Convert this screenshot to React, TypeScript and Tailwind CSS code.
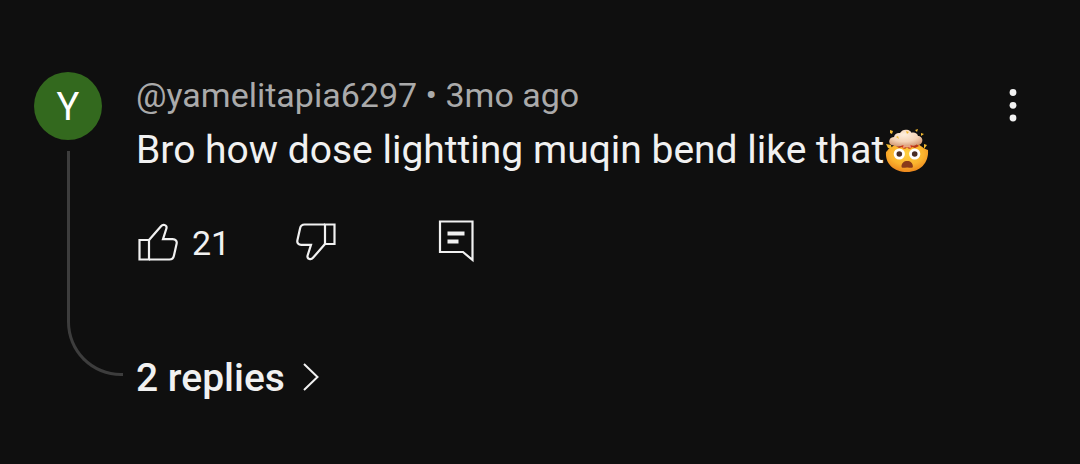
import React from 'react'

type CommentData = {
  author: string
  initial: string
  age: string
  text: string
  likes: number
  replies: number
}

const comment: CommentData = {
  author: '@yamelitapia6297',
  initial: 'Y',
  age: '3mo ago',
  text: 'Bro how dose lightting muqin bend like that',
  likes: 21,
  replies: 2,
}

const ThumbIcon: React.FC<{className?: string}> = ({className = ''}) => (
  <svg
    viewBox="0 0 40 40"
    fill="none"
    stroke="currentColor"
    strokeWidth="2.2"
    className={`size-10 ${className}`}
    aria-hidden="true"
  >
    <path d="M1.500 18H11v19.500H1.500z" />
    <path d="M11 18 23 4.200c1-1.200 2.300-1.700 3.600-1.200 1.600.5 2.300 1.900 1.800 3.500L25 17.200h9.700c2.900 0 4.500 1.900 3.900 4.500l-2.700 12.100c-.5 2.400-2 3.700-4.400 3.700H11" />
  </svg>
)

const ReplyIcon = () => (
  <svg viewBox="0 0 36 44" fill="none" className="h-11 w-9" aria-hidden="true">
    <path d="M2 1.500h32.500v38.500L25 32H2z" stroke="currentColor" strokeWidth="2.200" />
    <path d="M9.500 13.500h17M9.500 21.500h11" stroke="currentColor" strokeWidth="4" />
  </svg>
)

const ExplodingHead = () => (
  <svg viewBox="0 0 46 46" className="size-[46px] shrink-0" role="img" aria-label="exploding head">
    <defs>
      <radialGradient id="face" cx="50%" cy="35%" r="65%">
        <stop offset="0" stopColor="#ffd03f" />
        <stop offset="0.6" stopColor="#fbb42e" />
        <stop offset="1" stopColor="#ec861d" />
      </radialGradient>
      <radialGradient id="cloud" cx="45%" cy="30%" r="70%">
        <stop offset="0" stopColor="#fdeedd" />
        <stop offset="0.6" stopColor="#f3d2b5" />
        <stop offset="1" stopColor="#d59d7a" />
      </radialGradient>
    </defs>
    <path
      d="M2 25c1.500-1 2.500-4 5-4.500L12 17h22l5 3.500c1.500 1.500 3 1.500 5 2.500 1 13-8 22-21 22S1 37 2 25z"
      fill="url(#face)"
    />
    <path d="M12 19l4-5h14l5 5-4 2-3-1-3 2-2-2-2 2-3-2-3 1z" fill="#b83a1b" />
    <path d="M18 17l1 5 2-2zM28 17l-1 5-2-2z" fill="#e8321c" />
    <path d="M20 15h6l1 6-4-1-4 1z" fill="#e9a680" />
    <path
      d="M10 18.500c-4 0-5.500-3-4.500-5.500.8-2.300 2.500-3 4.500-3 .5-3 3.300-4.500 6-4 1.500-2.800 4.500-3.800 7-3.200 2 .3 3.500 1.300 4.500 3 3-1 6 .7 6.500 3.200 3 0 5 2.500 4.200 5.500-.7 2.800-3.200 4-5.700 3-2 1.500-4.500 1.500-6 .3-2 1.200-5 1.200-7 .2-3 1.500-6.500 2-9.500.5z"
      fill="url(#cloud)"
    />
    <path
      d="M6 3l3 1-1 3-2-1zM2 17l5 1 1 4-4-1zM31 3l3-1-1 3zM37 6l3 1-3 2zM40 17l3 1-3 4zM22 4l3 1-2 2zM12 10l2-1 1 3z"
      fill="#f3ba31"
    />
    <circle cx="15.300" cy="27" r="5.600" fill="#fff" />
    <circle cx="30.700" cy="27" r="5.600" fill="#fff" />
    <circle cx="15.300" cy="27" r="2.800" fill="#4a2d25" />
    <circle cx="30.700" cy="27" r="2.800" fill="#4a2d25" />
    <path d="M17.500 39.500c0-3.500 2.500-5.500 5.700-5.500s5.700 2 5.700 5.500c0 2-2.500 1-5.700 1s-5.700 1-5.700-1z" fill="#8a3a1a" />
  </svg>
)

const Comment: React.FC<{data: CommentData}> = ({data}) => (
  <article className="flex px-[34px] pt-[72px] pb-14">
    <div className="flex w-[102px] shrink-0 flex-col">
      <div className="flex size-[68px] items-center justify-center rounded-full bg-[#33691e] pt-0.5 text-[38px] text-white">
        {data.initial}
      </div>
      {/* thread line down to the replies */}
      <div className="mt-[11px] mr-[13px] mb-[30px] ml-[33px] flex-1 rounded-bl-[54px] border-b-3 border-l-3 border-[#3d3d3d]" />
    </div>

    <div className="min-w-0 flex-1">
      <p className="text-[34px] leading-[46px] text-[#aaaaaa]">
        {data.author} • {data.age}
      </p>
      <div className="flex items-center">
        <p className="text-[39px] leading-[64px]">{data.text}</p>
        <ExplodingHead />
      </div>

      <div className="mt-[38px] flex h-11 items-center pl-0.5">
        <button className="flex items-center gap-3.5" aria-label="Like">
          <ThumbIcon />
          <span className="pt-0.5 text-[34px] leading-[44px]">{data.likes}</span>
        </button>
        <button className="ml-[66px]" aria-label="Dislike">
          <ThumbIcon className="rotate-180" />
        </button>
        <button className="ml-[102px]" aria-label="Reply">
          <ReplyIcon />
        </button>
      </div>

      <button className="mt-[86px] flex items-center gap-4 text-[39px] leading-[56px] font-medium">
        {data.replies} replies
        <svg viewBox="0 0 20 30" fill="none" stroke="currentColor" strokeWidth="2" className="h-[30px] w-5" aria-hidden="true">
          <path d="m3 1 13.500 13L3 27" />
        </svg>
      </button>
    </div>

    <button className="mr-[25px] flex h-[68px] w-4 shrink-0 items-center justify-center self-start" aria-label="More actions">
      <svg viewBox="0 0 8 34" fill="currentColor" className="h-[34px] w-2" aria-hidden="true">
        <circle cx="4" cy="3.500" r="3.400" />
        <circle cx="4" cy="16.300" r="3.400" />
        <circle cx="4" cy="29" r="3.400" />
      </svg>
    </button>
  </article>
)

export default function App() {
  return (
    <main className="min-h-screen bg-[#0f0f0f] font-[Roboto,sans-serif] text-[#f1f1f1]">
      <Comment data={comment} />
    </main>
  )
}
